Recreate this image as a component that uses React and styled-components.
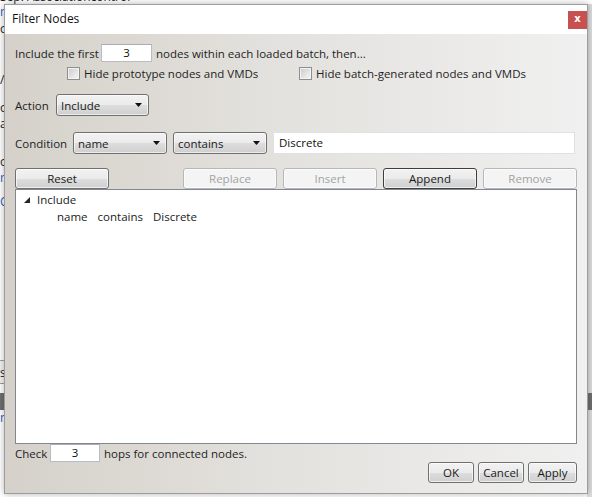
import React from "react";
import styled, { createGlobalStyle } from "styled-components";

const FONT = `"Open Sans", "Noto Sans", sans-serif`;

const Global = createGlobalStyle`
  html, body { margin: 0; padding: 0; }
  body {
    width: 592px; height: 497px; overflow: hidden; background: #fff;
    font-family: ${FONT}; font-size: 11.5px; color: #1e1e1e;
  }
  * { box-sizing: border-box; }
`;

const Screen = styled.div`
  position: relative;
  width: 592px;
  height: 497px;
  overflow: hidden;
  background: #fff;
  font-family: ${FONT};
  font-size: 11.5px;
`;

/* ---------- background application (only its edges show round the dialog) ---------- */
const Backdrop = styled.div`
  display: flex;
  flex-direction: column;
  width: 100%;
  height: 100%;
`;
const TopStrip = styled.div`
  height: 4px;
  flex-shrink: 0;
  overflow: hidden;
`;
const MiddleArea = styled.div`
  flex: 1;
  display: flex;
`;
const SideStrip = styled.div`
  width: ${(p) => p.$w}px;
  flex-shrink: 0;
  overflow: hidden;
  display: flex;
  flex-direction: column;
  background: ${(p) => p.$bg || "#fff"};
`;
const Covered = styled.div`
  flex: 1;
  background: #fff;
`;
const BackRow = styled.div`
  height: ${(p) => p.$h}px;
  flex-shrink: 0;
  margin-top: ${(p) => p.$mt || 0}px;
  line-height: ${(p) => p.$h}px;
  font-size: 12px;
  white-space: nowrap;
  color: ${(p) => p.$color || "#1e1e1e"};
  background: ${(p) => p.$bg || "transparent"};
  border-top: ${(p) => (p.$lineTop ? "1px solid #a0a0a0" : "none")};
  border-bottom: ${(p) => (p.$lineBottom ? "1px solid #a0a0a0" : "none")};
`;

/* ---------- dialog window ---------- */
const Dialog = styled.div`
  position: absolute;
  left: 4px;
  top: 4px;
  width: 584px;
  height: 490px;
  display: flex;
  flex-direction: column;
  border: 1px solid #9c9c9c;
  background: #fff;
  box-shadow: 0 0 7px rgba(0, 0, 0, 0.3);
`;

const TitleBar = styled.div`
  height: 29px;
  flex-shrink: 0;
  display: flex;
  align-items: flex-start;
  background: #fff;
  padding-left: 7px;
`;
const TitleText = styled.div`
  line-height: 28px;
  font-size: 12px;
  color: #111;
`;
const CloseButton = styled.div`
  margin-left: auto;
  margin-top: 6px;
  width: 19px;
  height: 18px;
  background: #c75050;
  color: #fff;
  font-family: "DejaVu Sans", sans-serif;
  font-weight: bold;
  font-size: 10px;
  line-height: 16px;
  text-align: center;
`;

const Body = styled.div`
  flex: 1;
  display: flex;
  flex-direction: column;
  padding: 0 10px 0 10px;
  background: linear-gradient(to right, #d5d1ca 0%, #e3e1dd 45%, #f0f0f0 100%);
`;

const Row = styled.div`
  display: flex;
  align-items: center;
  flex-shrink: 0;
  height: ${(p) => p.$h}px;
  margin-top: ${(p) => p.$mt || 0}px;
  justify-content: ${(p) => p.$justify || "flex-start"};
`;

const Label = styled.span`
  display: inline-block;
  flex-shrink: 0;
  width: ${(p) => (p.$w ? `${p.$w}px` : "auto")};
  margin-left: ${(p) => p.$ml || 0}px;
  white-space: nowrap;
  color: #1e1e1e;
`;

const NumberField = styled.div`
  width: ${(p) => p.$w}px;
  height: 18px;
  flex-shrink: 0;
  background: #fff;
  border: 1px solid #b9bcc2;
  border-top-color: #a9acb2;
  text-align: center;
  line-height: 16px;
  color: #111;
`;

const TextField = styled.div`
  width: ${(p) => p.$w}px;
  height: 22px;
  flex-shrink: 0;
  background: #fff;
  border: 1px solid #dfe1e4;
  padding-left: 5px;
  line-height: 20px;
  color: #111;
`;

const CheckGroup = styled.div`
  display: flex;
  align-items: center;
  width: ${(p) => (p.$w ? `${p.$w}px` : "auto")};
  margin-left: ${(p) => p.$ml || 0}px;
`;

const CheckBox = styled.span`
  width: 13px;
  height: 13px;
  flex-shrink: 0;
  border: 1px solid #8e8f8f;
  background: linear-gradient(135deg, #c9c9c9 0%, #e6e6e6 60%, #f7f7f7 100%);
  box-shadow: inset 0 0 0 1px #f2f2f2;
  margin-right: 4px;
`;

const Select = styled.div`
  width: ${(p) => p.$w}px;
  height: 22px;
  flex-shrink: 0;
  margin-right: ${(p) => p.$mr || 0}px;
  border: 1px solid #707070;
  border-radius: 3px;
  background: linear-gradient(to bottom, #f2f2f2 0%, #ebebeb 50%, #dddddd 51%, #cfcfcf 100%);
  box-shadow: inset 0 0 0 1px rgba(255, 255, 255, 0.6);
  display: flex;
  align-items: center;
  padding: 0 6px 0 4px;
  color: #1a1a1a;
`;
const SelectText = styled.span`
  flex: 1;
  white-space: nowrap;
`;
const Arrow = () => (
  <svg width="7" height="4" viewBox="0 0 7 4">
    <polygon points="0,0 7,0 3.5,4" fill="#111" />
  </svg>
);

const Button = styled.div`
  width: ${(p) => p.$w}px;
  height: 21px;
  flex-shrink: 0;
  border: 1px solid ${(p) => (p.$disabled ? "#b5b8bb" : p.$default ? "#3e3e3e" : "#707070")};
  border-radius: 3px;
  background: ${(p) =>
    p.$disabled
      ? "#f4f4f4"
      : "linear-gradient(to bottom, #f2f2f2 0%, #ebebeb 50%, #dddddd 51%, #cfcfcf 100%)"};
  box-shadow: inset 0 0 0 1px rgba(255, 255, 255, 0.65);
  color: ${(p) => (p.$disabled ? "#a3a3a3" : "#1a1a1a")};
  text-align: center;
  line-height: 19px;
  white-space: nowrap;
`;

const ButtonGroup = styled.div`
  display: flex;
  gap: ${(p) => p.$gap}px;
`;

const Tree = styled.div`
  height: 255px;
  flex-shrink: 0;
  background: #fff;
  border: 1px solid #828790;
  padding-top: 1px;
`;
const TreeItem = styled.div`
  display: flex;
  align-items: center;
  height: 17px;
  padding-left: ${(p) => p.$indent}px;
  color: #1a1a1a;
`;
const Expander = styled.span`
  display: inline-flex;
  width: 13px;
`;
const Word = styled.span`
  margin-right: 10px;
  white-space: nowrap;
`;

const ExpandedGlyph = () => (
  <svg width="6" height="6" viewBox="0 0 6 6">
    <polygon points="6,0 6,6 0,6" fill="#262626" />
  </svg>
);

const leftFragments = [
  { h: 16, text: "rl", color: "#1f5fbf" },
  { h: 18, text: "o" },
  { h: 34, text: "" },
  { h: 16, text: "/" },
  { h: 12, text: "" },
  { h: 16, text: "o" },
  { h: 16, text: "al" },
  { h: 22, text: "" },
  { h: 16, text: "o" },
  { h: 16, text: "rl", color: "#1f5fbf" },
  { h: 8, text: "" },
  { h: 16, text: "C", color: "#1f5fbf" },
  { h: 150, text: "" },
];

export default function App() {
  return (
    <Screen>
      <Global />
      <Backdrop>
        <TopStrip>
          <BackRow $h={13} $mt={-10}>Sep. Associationcontrol</BackRow>
        </TopStrip>
        <MiddleArea>
          <SideStrip $w={4}>
            {leftFragments.map((f, i) => (
              <BackRow key={i} $h={f.h} $color={f.color}>
                {f.text}
              </BackRow>
            ))}
            <BackRow $h={24} $lineTop $lineBottom $bg="#f3f3f3">s</BackRow>
            <BackRow $h={9} />
            <BackRow $h={17} $bg="#6f6f6f" />
            <BackRow $h={16} $color="#1f5fbf">m</BackRow>
          </SideStrip>
          <Covered />
          <SideStrip $w={5} $bg="#dedede">
            <BackRow $h={389} />
            <BackRow $h={17} $bg="#6f6f6f" />
          </SideStrip>
        </MiddleArea>
      </Backdrop>

      <Dialog>
        <TitleBar>
          <TitleText>Filter Nodes</TitleText>
          <CloseButton>x</CloseButton>
        </TitleBar>
        <Body>
          <Row $h={18} $mt={10}>
            <Label $w={86}>Include the first</Label>
            <NumberField $w={51}>3</NumberField>
            <Label $ml={4}>nodes within each loaded batch, then...</Label>
          </Row>
          <Row $h={13} $mt={5}>
            <CheckGroup $ml={52} $w={232}>
              <CheckBox />
              <Label>Hide prototype nodes and VMDs</Label>
            </CheckGroup>
            <CheckGroup>
              <CheckBox />
              <Label>Hide batch-generated nodes and VMDs</Label>
            </CheckGroup>
          </Row>
          <Row $h={22} $mt={14}>
            <Label $w={41}>Action</Label>
            <Select $w={93}>
              <SelectText>Include</SelectText>
              <Arrow />
            </Select>
          </Row>
          <Row $h={22} $mt={16}>
            <Label $w={58}>Condition</Label>
            <Select $w={94} $mr={6}>
              <SelectText>name</SelectText>
              <Arrow />
            </Select>
            <Select $w={94} $mr={6}>
              <SelectText>contains</SelectText>
              <Arrow />
            </Select>
            <TextField $w={302}>Discrete</TextField>
          </Row>
          <Row $h={21} $mt={14} $justify="space-between">
            <Button $w={94}>Reset</Button>
            <ButtonGroup $gap={6}>
              <Button $w={94} $disabled>Replace</Button>
              <Button $w={94} $disabled>Insert</Button>
              <Button $w={94} $default>Append</Button>
              <Button $w={94} $disabled>Remove</Button>
            </ButtonGroup>
          </Row>
          <Tree>
            <TreeItem $indent={8}>
              <Expander>
                <ExpandedGlyph />
              </Expander>
              <Word>Include</Word>
            </TreeItem>
            <TreeItem $indent={41}>
              <Word>name</Word>
              <Word>contains</Word>
              <Word>Discrete</Word>
            </TreeItem>
          </Tree>
          <Row $h={18}>
            <Label $w={35}>Check</Label>
            <NumberField $w={50}>3</NumberField>
            <Label $ml={4}>hops for connected nodes.</Label>
          </Row>
          <Row $h={21} $justify="flex-end">
            <ButtonGroup $gap={4}>
              <Button $w={46}>OK</Button>
              <Button $w={46}>Cancel</Button>
              <Button $w={49}>Apply</Button>
            </ButtonGroup>
          </Row>
        </Body>
      </Dialog>
    </Screen>
  );
}
